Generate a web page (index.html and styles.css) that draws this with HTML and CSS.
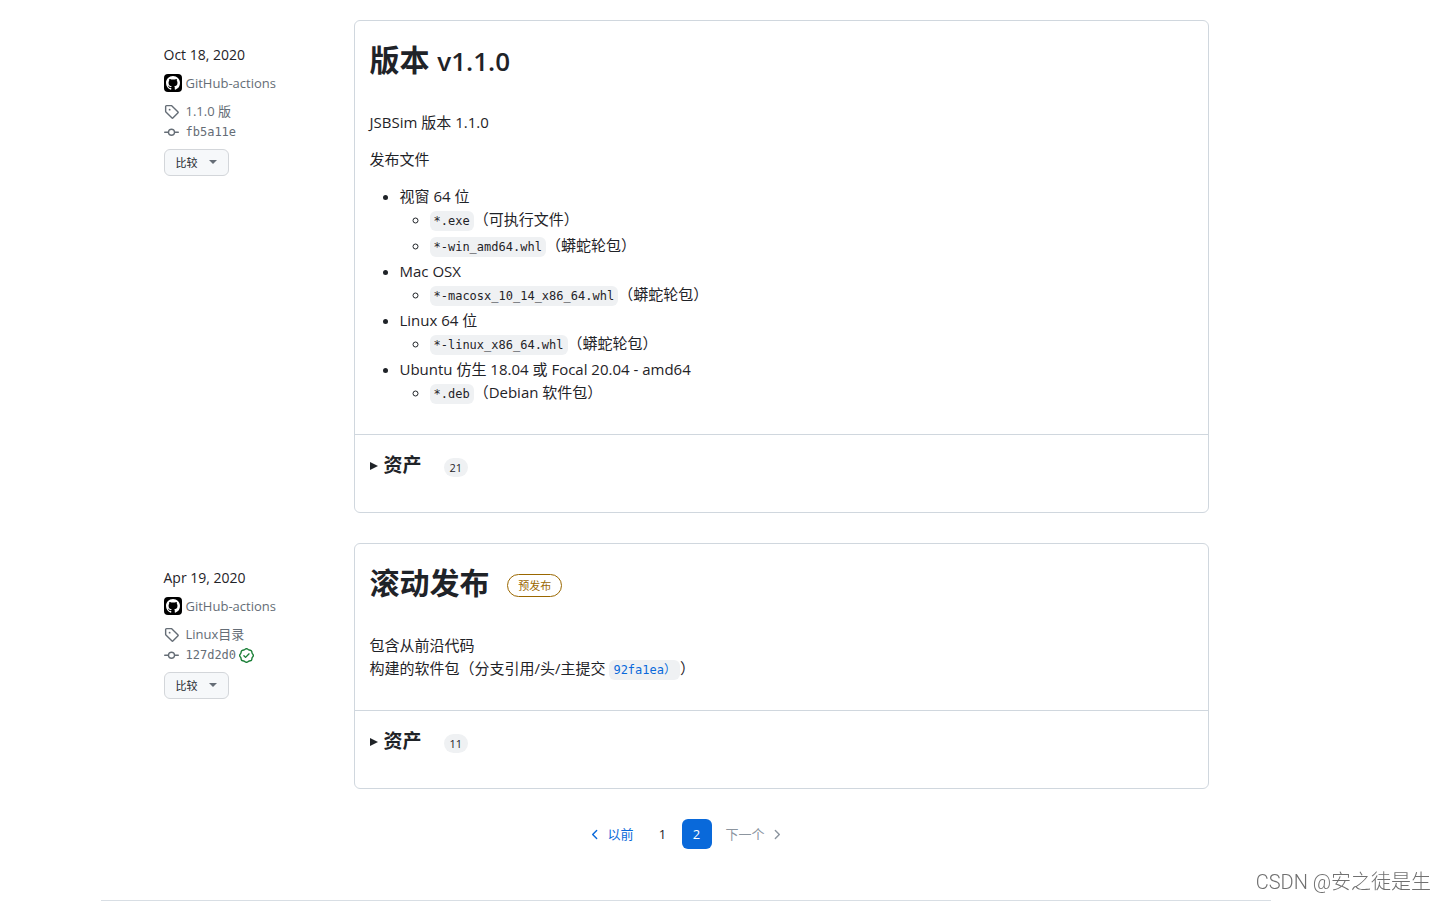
FILE: index.html
```html
<!DOCTYPE html>
<html lang="zh-CN">
<head>
    <meta charset="UTF-8">
    <meta name="viewport" content="width=device-width, initial-scale=1.0">
    <title>JSBSim - Releases</title>
    <link rel="stylesheet" href="styles.css">
</head>
<body>

    <!-- shared icons -->
    <svg class="sprite" aria-hidden="true">
        <symbol id="mark" viewBox="0 0 16 16"><path d="M8 0C3.58 0 0 3.58 0 8c0 3.54 2.29 6.53 5.47 7.59.4.07.55-.17.55-.38 0-.19-.01-.82-.01-1.49-2.01.37-2.53-.49-2.69-.94-.09-.23-.48-.94-.82-1.13-.28-.15-.68-.52-.01-.53.63-.01 1.08.58 1.23.82.72 1.21 1.87.87 2.33.66.07-.52.28-.87.51-1.07-1.78-.2-3.64-.89-3.64-3.95 0-.87.31-1.59.82-2.15-.08-.2-.36-1.02.08-2.12 0 0 .67-.21 2.2.82.64-.18 1.32-.27 2-.27s1.36.09 2 .27c1.53-1.04 2.2-.82 2.2-.82.44 1.1.16 1.92.08 2.12.51.56.82 1.27.82 2.15 0 3.07-1.87 3.75-3.65 3.95.29.25.54.73.54 1.48 0 1.07-.01 1.93-.01 2.2 0 .21.15.46.55.38A8.01 8.01 0 0 0 16 8c0-4.42-3.58-8-8-8Z"/></symbol>
        <symbol id="tag" viewBox="0 0 16 16"><path d="M1 7.775V2.75C1 1.784 1.784 1 2.75 1h5.025c.464 0 .91.184 1.238.513l6.25 6.25a1.75 1.75 0 0 1 0 2.474l-5.026 5.026a1.75 1.75 0 0 1-2.474 0l-6.25-6.25A1.752 1.752 0 0 1 1 7.775Zm1.5 0c0 .066.026.13.073.177l6.25 6.25a.25.25 0 0 0 .354 0l5.025-5.025a.25.25 0 0 0 0-.354l-6.25-6.25a.25.25 0 0 0-.177-.073H2.75a.25.25 0 0 0-.25.25ZM6 5a1 1 0 1 1 0 2 1 1 0 0 1 0-2Z"/></symbol>
        <symbol id="commit" viewBox="0 0 16 16"><path d="M11.93 8.5a4.002 4.002 0 0 1-7.86 0H.75a.75.75 0 0 1 0-1.5h3.32a4.002 4.002 0 0 1 7.86 0h3.32a.75.75 0 0 1 0 1.5Zm-1.43-.75a2.5 2.5 0 1 0-5 0 2.5 2.5 0 0 0 5 0Z"/></symbol>
        <symbol id="verified" viewBox="0 0 16 16"><path fill-rule="evenodd" d="m9.585.52.929.68c.153.112.331.186.518.215l1.138.175a2.678 2.678 0 0 1 2.24 2.24l.174 1.139c.029.187.103.365.215.518l.68.928a2.677 2.677 0 0 1 0 3.17l-.68.928a1.174 1.174 0 0 0-.215.518l-.175 1.138a2.678 2.678 0 0 1-2.241 2.241l-1.138.175a1.17 1.17 0 0 0-.518.215l-.928.68a2.677 2.677 0 0 1-3.17 0l-.928-.68a1.174 1.174 0 0 0-.518-.215L3.83 14.41a2.678 2.678 0 0 1-2.24-2.24l-.175-1.138a1.17 1.17 0 0 0-.215-.518l-.68-.928a2.677 2.677 0 0 1 0-3.17l.68-.928c.112-.153.186-.331.215-.518l.175-1.14a2.678 2.678 0 0 1 2.24-2.24l1.139-.175c.187-.029.365-.103.518-.215l.928-.68a2.677 2.677 0 0 1 3.17 0ZM7.303 1.728l-.927.68a2.67 2.67 0 0 1-1.18.489l-1.137.174a1.179 1.179 0 0 0-.987.987l-.174 1.136a2.677 2.677 0 0 1-.489 1.18l-.68.928a1.18 1.18 0 0 0 0 1.394l.68.927c.256.348.424.753.489 1.18l.174 1.137c.078.509.478.909.987.987l1.136.174a2.67 2.67 0 0 1 1.18.489l.928.68c.414.305.979.305 1.394 0l.927-.68a2.67 2.67 0 0 1 1.18-.489l1.137-.174a1.18 1.18 0 0 0 .987-.987l.174-1.136a2.67 2.67 0 0 1 .489-1.18l.68-.928a1.176 1.176 0 0 0 0-1.394l-.68-.927a2.686 2.686 0 0 1-.489-1.18l-.174-1.137a1.179 1.179 0 0 0-.987-.987l-1.136-.174a2.677 2.677 0 0 1-1.18-.489l-.928-.68a1.176 1.176 0 0 0-1.394 0ZM11.28 6.78l-3.75 3.75a.75.75 0 0 1-1.06 0L4.72 8.78a.751.751 0 0 1 .018-1.042.751.751 0 0 1 1.042-.018L7 8.94l3.22-3.22a.751.751 0 0 1 1.042.018.751.751 0 0 1 .018 1.042Z"/></symbol>
        <symbol id="left" viewBox="0 0 16 16"><path d="M9.78 12.78a.75.75 0 0 1-1.06 0L4.47 8.53a.75.75 0 0 1 0-1.06l4.25-4.25a.75.75 0 0 1 1.06 1.06L6.06 8l3.72 3.72a.75.75 0 0 1 0 1.06Z"/></symbol>
        <symbol id="right" viewBox="0 0 16 16"><path d="M6.22 3.22a.75.75 0 0 1 1.06 0l4.25 4.25a.75.75 0 0 1 0 1.06l-4.25 4.25a.75.75 0 0 1-1.06-1.06L9.94 8 6.22 4.28a.75.75 0 0 1 0-1.06Z"/></symbol>
    </svg>

    <main class="releases">
        <section class="release">
            <div class="meta">
                <div class="date">Oct 18, 2020</div>
                <a class="meta-row author" href="#"><span class="avatar"><svg><use href="#mark"/></svg></span>GitHub-actions</a>
                <a class="meta-row" href="#"><svg class="icon"><use href="#tag"/></svg>1.1.0 版</a>
                <a class="meta-row sha" href="#"><svg class="icon"><use href="#commit"/></svg>fb5a11e</a>
                <button class="compare" type="button">比较 <span class="caret"></span></button>
            </div>
            <article class="card">
                <div class="card-body">
                    <h1>版本 <span class="version">v1.1.0</span></h1>
                    <p>JSBSim 版本 1.1.0</p>
                    <p>发布文件</p>
                    <ul>
                        <li>视窗 64 位
                            <ul>
                                <li><code>*.exe</code>（可执行文件）</li>
                                <li><code>*-win_amd64.whl</code>（蟒蛇轮包）</li>
                            </ul>
                        </li>
                        <li>Mac OSX
                            <ul>
                                <li><code>*-macosx_10_14_x86_64.whl</code>（蟒蛇轮包）</li>
                            </ul>
                        </li>
                        <li>Linux 64 位
                            <ul>
                                <li><code>*-linux_x86_64.whl</code>（蟒蛇轮包）</li>
                            </ul>
                        </li>
                        <li>Ubuntu 仿生 18.04 或 Focal 20.04 - amd64
                            <ul>
                                <li><code>*.deb</code>（Debian 软件包）</li>
                            </ul>
                        </li>
                    </ul>
                </div>
                <details class="assets">
                    <summary><span class="assets-title">资产</span><span class="counter">21</span></summary>
                </details>
            </article>
        </section>

        <section class="release">
            <div class="meta">
                <div class="date">Apr 19, 2020</div>
                <a class="meta-row author" href="#"><span class="avatar"><svg><use href="#mark"/></svg></span>GitHub-actions</a>
                <a class="meta-row" href="#"><svg class="icon"><use href="#tag"/></svg>Linux目录</a>
                <a class="meta-row sha" href="#"><svg class="icon"><use href="#commit"/></svg>127d2d0<svg class="icon verified"><use href="#verified"/></svg></a>
                <button class="compare" type="button">比较 <span class="caret"></span></button>
            </div>
            <article class="card">
                <div class="card-body">
                    <h1>滚动发布 <span class="label">预发布</span></h1>
                    <p>包含从前沿代码<br>构建的软件包（分支引用/头/主提交 <a href="#"><code>92fa1ea）</code></a>）</p>
                </div>
                <details class="assets">
                    <summary><span class="assets-title">资产</span><span class="counter">11</span></summary>
                </details>
            </article>
        </section>

        <nav class="pagination">
            <a href="#"><svg class="icon"><use href="#left"/></svg>以前</a>
            <a class="page" href="#">1</a>
            <a class="page current" href="#">2</a>
            <span class="disabled">下一个<svg class="icon"><use href="#right"/></svg></span>
        </nav>
    </main>

    <footer class="footer"></footer>
    <div class="watermark">CSDN @安之徒是生</div>

</body>
</html>
```

FILE: styles.css
```css
* {
    box-sizing: border-box;
}

body {
    margin: 0;
    padding: 20px 74px 0 0;
    background-color: #fff;
    color: #1f2328;
    font-family: "Open Sans", "Noto Sans CJK SC", sans-serif;
    font-size: 15px;
    line-height: 23px;
    text-spacing-trim: space-all;
}

a {
    color: #0969da;
    text-decoration: none;
}

code {
    font-family: "DejaVu Sans Mono", "Noto Sans CJK SC", monospace;
    font-size: 12px;
    line-height: 1;
    padding: 3px 4px;
    border-radius: 6px;
    background-color: #eff1f3;
}

.sprite {
    display: none;
}

.icon {
    width: 15px;
    height: 15px;
    flex: none;
    fill: currentColor;
}

.releases {
    max-width: 1045px;
    margin: 0 auto;
}

.release {
    display: flex;
    margin-bottom: 30px;
}

/* left column */
.meta {
    width: 190px;
    flex: none;
    padding-top: 23px;
}

.date {
    font-size: 14px;
}

.meta-row {
    display: flex;
    align-items: center;
    gap: 7px;
    height: 20px;
    margin-top: 8px;
    color: #656d76;
    font-size: 13px;
}

.author {
    gap: 4px;
    margin-top: 7px;
}

.avatar {
    display: flex;
    width: 18px;
    height: 18px;
    padding: 2px;
    border-radius: 4px;
    background-color: #000;
}

.avatar svg {
    width: 14px;
    height: 14px;
    fill: #fff;
}

.sha {
    margin-top: 1px;
    font-family: "DejaVu Sans Mono", monospace;
    font-size: 12px;
}

.verified {
    margin-left: -4px;
    color: #1a7f37;
}

.compare {
    display: flex;
    align-items: center;
    gap: 11px;
    height: 27px;
    margin-top: 7px;
    padding: 0 11px 2px;
    border: 1px solid #d3d6da;
    border-radius: 6px;
    background-color: #f6f8fa;
    color: #24292f;
    font-family: inherit;
    font-size: 11px;
    cursor: pointer;
}

.caret {
    border: 4px solid transparent;
    border-top-color: #656d76;
    border-bottom: 0;
}

/* release card */
.card {
    flex: 1;
    min-width: 0;
    border: 1px solid #d0d7de;
    border-radius: 6px;
}

.card-body {
    padding: 16px 15px 30px;
}

h1 {
    margin: 0 0 29px;
    font-size: 30px;
    font-weight: 600;
    line-height: 45px;
}

.version {
    font-size: 26px;
    line-height: 1;
}

.label {
    display: inline-block;
    margin-left: 10px;
    padding: 0 10px;
    border: 1px solid #9a6700;
    border-radius: 12px;
    color: #9a6700;
    font-size: 11px;
    font-weight: 400;
    line-height: 21px;
    vertical-align: middle;
}

p {
    margin: 0 0 14px;
}

p:last-child {
    margin-bottom: 0;
}

ul {
    margin: 0;
    padding-left: 30px;
}

li + li {
    margin-top: 3px;
}

.assets {
    padding: 17px 15px 33px;
    border-top: 1px solid #d0d7de;
}

summary {
    display: flex;
    align-items: center;
    height: 27px;
    cursor: pointer;
}

summary::before {
    content: "";
    margin-right: 6px;
    border: 4px solid transparent;
    border-left: 8px solid #1f2328;
    border-right: 0;
}

.assets-title {
    font-size: 19px;
    font-weight: 600;
}

.counter {
    margin-top: 4px;
    margin-left: 22px;
    padding: 0 6px;
    border-radius: 10px;
    background-color: #eff1f3;
    font-size: 11px;
    line-height: 19px;
}

.pagination {
    display: flex;
    justify-content: center;
    gap: 4px;
    font-size: 13px;
    line-height: 30px;
}

.pagination a,
.pagination span {
    display: flex;
    align-items: center;
    justify-content: center;
    gap: 4px;
    padding: 0 10px;
    border-radius: 6px;
}

.pagination .page {
    min-width: 30px;
    color: #1f2328;
}

.pagination .current {
    background-color: #0969da;
    color: #fff;
}

.pagination .disabled {
    color: #8c959f;
}

.footer {
    max-width: 1170px;
    margin: 51px auto 0;
    border-top: 1px solid #d8dee4;
}

.watermark {
    position: fixed;
    right: 15px;
    bottom: 6px;
    color: #707070;
    font-family: Roboto, "Noto Sans CJK SC", sans-serif;
    font-size: 20px;
    font-weight: 300;
    line-height: 28px;
}
```
